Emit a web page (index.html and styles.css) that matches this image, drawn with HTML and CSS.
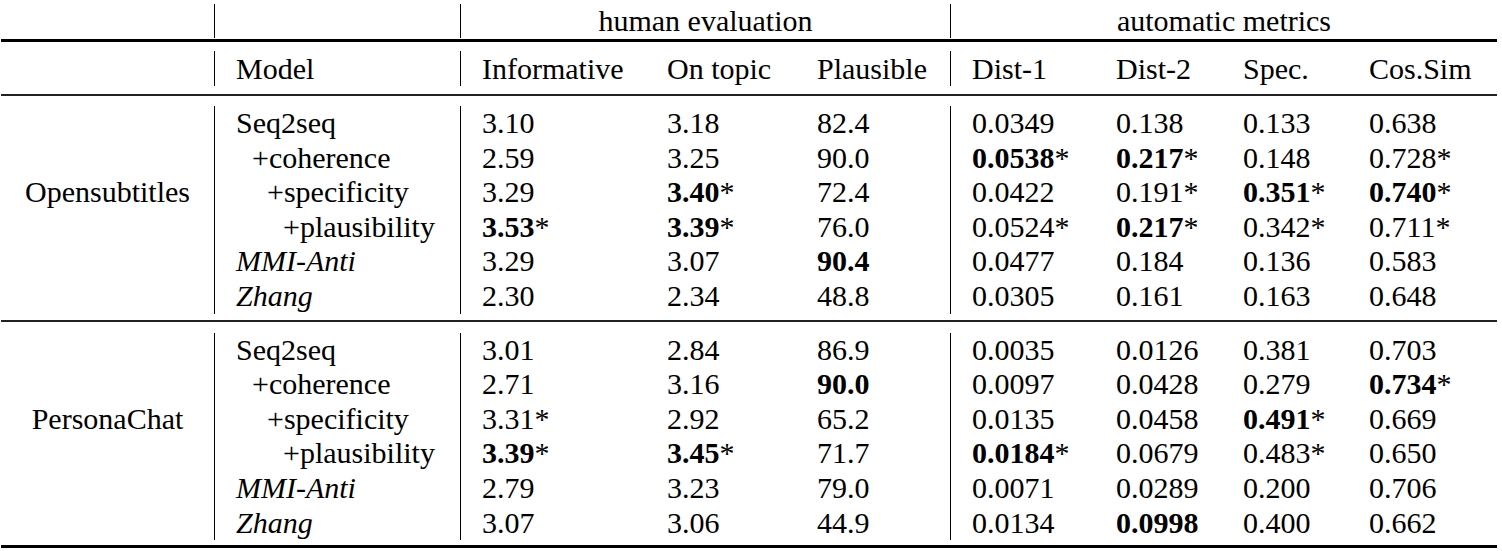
FILE: index.html
```html
<!DOCTYPE html>
<html lang="en">
<head>
<meta charset="utf-8">
<title>Results table</title>
<link rel="stylesheet" href="styles.css">
</head>
<body>
<div class="results">
  <p class="cell h1"></p>
  <p class="cell h1 vl"></p>
  <p class="cell h1 vl center span3">human evaluation</p>
  <p class="cell h1 vl center span4">automatic metrics</p>

  <div class="rule thick top"></div>

  <p class="cell h2"></p>
  <p class="cell h2 vl">Model</p>
  <p class="cell h2 vl">Informative</p>
  <p class="cell h2">On topic</p>
  <p class="cell h2">Plausible</p>
  <p class="cell h2 vl">Dist-1</p>
  <p class="cell h2">Dist-2</p>
  <p class="cell h2">Spec.</p>
  <p class="cell h2">Cos.Sim</p>

  <div class="rule thin mid1"></div>

  <p class="cell"></p>
  <p class="cell vl">Seq2seq</p>
  <p class="cell vl">3.10</p><p class="cell">3.18</p><p class="cell">82.4</p>
  <p class="cell vl">0.0349</p><p class="cell">0.138</p><p class="cell">0.133</p><p class="cell">0.638</p>

  <p class="cell"></p>
  <p class="cell vl ind1">+coherence</p>
  <p class="cell vl">2.59</p><p class="cell">3.25</p><p class="cell">90.0</p>
  <p class="cell vl"><b class="bd">0.0538</b>*</p><p class="cell"><b class="bd">0.217</b>*</p><p class="cell">0.148</p><p class="cell">0.728*</p>

  <p class="cell center">Opensubtitles</p>
  <p class="cell vl ind2">+specificity</p>
  <p class="cell vl">3.29</p><p class="cell"><b class="bd">3.40</b>*</p><p class="cell">72.4</p>
  <p class="cell vl">0.0422</p><p class="cell">0.191*</p><p class="cell"><b class="bd">0.351</b>*</p><p class="cell"><b class="bd">0.740</b>*</p>

  <p class="cell"></p>
  <p class="cell vl ind3">+plausibility</p>
  <p class="cell vl"><b class="bd">3.53</b>*</p><p class="cell"><b class="bd">3.39</b>*</p><p class="cell">76.0</p>
  <p class="cell vl">0.0524*</p><p class="cell"><b class="bd">0.217</b>*</p><p class="cell">0.342*</p><p class="cell">0.711*</p>

  <p class="cell"></p>
  <p class="cell vl"><i class="it">MMI-Anti</i></p>
  <p class="cell vl">3.29</p><p class="cell">3.07</p><p class="cell"><b class="bd">90.4</b></p>
  <p class="cell vl">0.0477</p><p class="cell">0.184</p><p class="cell">0.136</p><p class="cell">0.583</p>

  <p class="cell"></p>
  <p class="cell vl"><i class="it">Zhang</i></p>
  <p class="cell vl">2.30</p><p class="cell">2.34</p><p class="cell">48.8</p>
  <p class="cell vl">0.0305</p><p class="cell">0.161</p><p class="cell">0.163</p><p class="cell">0.648</p>

  <div class="rule thin mid2"></div>

  <p class="cell"></p>
  <p class="cell vl">Seq2seq</p>
  <p class="cell vl">3.01</p><p class="cell">2.84</p><p class="cell">86.9</p>
  <p class="cell vl">0.0035</p><p class="cell">0.0126</p><p class="cell">0.381</p><p class="cell">0.703</p>

  <p class="cell"></p>
  <p class="cell vl ind1">+coherence</p>
  <p class="cell vl">2.71</p><p class="cell">3.16</p><p class="cell"><b class="bd">90.0</b></p>
  <p class="cell vl">0.0097</p><p class="cell">0.0428</p><p class="cell">0.279</p><p class="cell"><b class="bd">0.734</b>*</p>

  <p class="cell center">PersonaChat</p>
  <p class="cell vl ind2">+specificity</p>
  <p class="cell vl">3.31*</p><p class="cell">2.92</p><p class="cell">65.2</p>
  <p class="cell vl">0.0135</p><p class="cell">0.0458</p><p class="cell"><b class="bd">0.491</b>*</p><p class="cell">0.669</p>

  <p class="cell"></p>
  <p class="cell vl ind3">+plausibility</p>
  <p class="cell vl"><b class="bd">3.39</b>*</p><p class="cell"><b class="bd">3.45</b>*</p><p class="cell">71.7</p>
  <p class="cell vl"><b class="bd">0.0184</b>*</p><p class="cell">0.0679</p><p class="cell">0.483*</p><p class="cell">0.650</p>

  <p class="cell"></p>
  <p class="cell vl"><i class="it">MMI-Anti</i></p>
  <p class="cell vl">2.79</p><p class="cell">3.23</p><p class="cell">79.0</p>
  <p class="cell vl">0.0071</p><p class="cell">0.0289</p><p class="cell">0.200</p><p class="cell">0.706</p>

  <p class="cell"></p>
  <p class="cell vl"><i class="it">Zhang</i></p>
  <p class="cell vl">3.07</p><p class="cell">3.06</p><p class="cell">44.9</p>
  <p class="cell vl">0.0134</p><p class="cell"><b class="bd">0.0998</b></p><p class="cell">0.400</p><p class="cell">0.662</p>

  <div class="rule thick bottom"></div>
</div>
</body>
</html>
```

FILE: styles.css
```css
body {
  margin: 4px 0 0 1px;
  font-family: "Times New Roman", "Liberation Serif", Tinos, serif;
  font-size: 30px;
  color: #000;
  background: #fff;
}

.results {
  display: grid;
  grid-template-columns: 213px 246px 186px 150px 154px 145px 127px 126px 149px;
  width: 1496px;
  font-family: "Times New Roman", "Liberation Serif", Tinos, serif;
}

.cell {
  font-family: "Times New Roman", "Liberation Serif", Tinos, serif;
  margin: 0;
  height: 34.6px;
  line-height: 34.6px;
  padding-left: 21px;
  white-space: nowrap;
}

.cell.h1 { height: 34px; line-height: 34px; }
.cell.h2 { height: 35px; line-height: 35px; }
.cell.vl { border-left: 1px solid #000; }
.cell.center { text-align: center; padding-left: 0; }

.span3 { grid-column: span 3; }
.span4 { grid-column: span 4; }

.cell.ind1 { padding-left: 37px; }
.cell.ind2 { padding-left: 52px; }
.cell.ind3 { padding-left: 68px; }

.rule { grid-column: 1 / -1; background: #000; }
.rule.thick { height: 3px; }
.rule.thin { height: 2px; background: #222; }
.rule.top { margin: 1px 0 9px; }
.rule.mid1 { margin: 8px 0 10px; }
.rule.mid2 { margin: 6px 0 11px; }
.rule.bottom { margin: 5px 0 0; }

.bd { font-family: "Times New Roman", "Liberation Serif", Tinos, serif; font-weight: 700; }
.it { font-family: "Times New Roman", "Liberation Serif", Tinos, serif; font-style: italic; }
```
